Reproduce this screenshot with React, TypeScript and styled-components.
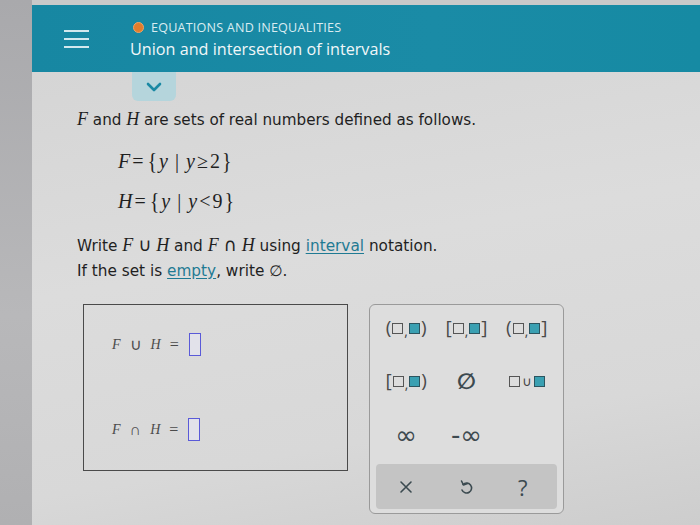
import React from "react";
import styled, { createGlobalStyle } from "styled-components";

const GlobalStyle = createGlobalStyle`
  html, body {
    margin: 0;
    padding: 0;
    width: 700px;
    height: 525px;
    overflow: hidden;
    background: #b4b4b6;
  }
  * { box-sizing: border-box; }
`;

const Screen = styled.div`
  display: flex;
  width: 700px;
  height: 525px;
`;

const Bezel = styled.div`
  width: 32px;
  flex-shrink: 0;
  background: linear-gradient(180deg, #a9a9ac 0%, #b8b8ba 60%, #b0b0b2 100%);
`;

const Main = styled.div`
  flex: 1;
  display: flex;
  flex-direction: column;
  padding-top: 5px;
  background: #c9c9c9;
`;

const Header = styled.header`
  height: 67px;
  background: linear-gradient(90deg, #1787a2 0%, #1a8ba6 60%, #168aa3 100%);
  display: flex;
  align-items: center;
  color: #e8f3f6;
  font-family: "Open Sans", "Liberation Sans", sans-serif;
`;

const Burger = styled.div`
  width: 25px;
  margin-left: 32px;
  display: flex;
  flex-direction: column;
  gap: 6px;
  span {
    display: block;
    height: 2px;
    background: #d2e8ee;
  }
`;

const Titles = styled.div`
  margin-left: 41px;
  display: flex;
  flex-direction: column;
  gap: 2px;
  margin-top: 1px;
`;

const Topic = styled.div`
  display: flex;
  align-items: center;
  font-size: 12.6px;
  letter-spacing: 0.2px;
  color: #d9ecf1;
`;

const Dot = styled.span`
  width: 11px;
  height: 11px;
  border-radius: 50%;
  background: #e27d2c;
  border: 1px solid #f1a567;
  margin-left: 3px;
  margin-right: 7px;
`;

const Title = styled.div`
  font-size: 16.2px;
  color: #f1f7f9;
`;

const Body = styled.div`
  flex: 1;
  position: relative;
  background: linear-gradient(170deg, #d5d5d5 0%, #dcdcdc 40%, #d8d8d8 75%, #cdcdcd 100%);
  padding-left: 45px;
  font-family: "DejaVu Sans", Verdana, sans-serif;
  color: #1f1f1f;
`;

const Tab = styled.div`
  width: 44px;
  height: 29px;
  margin-left: 55px;
  background: #b5d5dc;
  border-radius: 0 0 6px 6px;
  display: flex;
  align-items: center;
  justify-content: center;
`;

const Intro = styled.p`
  margin: 8px 0 0;
  font-size: 15.2px;
  line-height: 20px;
`;

const MathVar = styled.span`
  font-family: "Liberation Serif", "Times New Roman", serif;
  font-style: italic;
  font-size: 18px;
`;

const Defs = styled.div`
  margin: 20px 0 0 41px;
  display: flex;
  flex-direction: column;
  gap: 18px;
  font-family: "Liberation Serif", "Times New Roman", serif;
  font-size: 20px;
  line-height: 22px;
`;

const Def = styled.div`
  i { font-style: italic; }
  .eq { margin: 0 2px; }
  .brace { display: inline-block; transform: scaleY(1.15); margin: 0 2px; }
  .bar { margin: 0 7px; }
  .rel { margin: 0 2px; }
`;

const Instr = styled.div`
  margin-top: 20px;
  font-size: 15.3px;
  line-height: 25px;
  a {
    color: #1f7a93;
    text-decoration: underline;
    text-underline-offset: 2px;
  }
  .op { font-size: 18px; }
`;

const Workspace = styled.div`
  display: flex;
  gap: 21px;
  margin-top: 20px;
  margin-left: 6px;
`;

const AnswerBox = styled.div`
  width: 265px;
  height: 167px;
  border: 1.5px solid #4a4a4a;
  padding: 28px 0 0 28px;
  display: flex;
  flex-direction: column;
  gap: 62px;
`;

const Eq = styled.div`
  display: flex;
  align-items: center;
  font-family: "Liberation Serif", "Times New Roman", serif;
  font-size: 14px;
  color: #4b4b4b;
  i { font-style: italic; margin: 0 5px; }
  i:first-child { margin-left: 0; }
  .op { margin: 0 4px; font-size: 16px; }
`;

const Slot = styled.span`
  display: inline-block;
  width: 12px;
  height: 23px;
  border: 1.5px solid #5a5ad8;
  margin-left: 6px;
  background: #e2e2ea;
`;

const Keypad = styled.div`
  width: 195px;
  height: 210px;
  border: 1.5px solid #9a9a9a;
  border-radius: 6px;
  background: #dddddd;
  padding: 0 6px 4px;
  display: flex;
  flex-direction: column;
`;

const KeyGrid = styled.div`
  display: grid;
  grid-template-columns: repeat(3, 1fr);
  grid-auto-rows: 47px;
  row-gap: 6px;
`;

const Key = styled.div<{ $big?: boolean }>`
  display: flex;
  align-items: center;
  justify-content: center;
  font-family: "DejaVu Sans", sans-serif;
  font-size: ${(p) => (p.$big ? "26px" : "17px")};
  color: #3d4a50;
`;

const Sq = styled.span<{ $filled?: boolean }>`
  display: inline-block;
  width: 11px;
  height: 11px;
  border: 1.5px solid ${(p) => (p.$filled ? "#2c5560" : "#555")};
  background: ${(p) => (p.$filled ? "#3aa0b2" : "transparent")};
  margin: 0 1px;
`;

const Brk = styled.span`
  font-family: "Open Sans", sans-serif;
  font-size: 19px;
  color: #4a4a4a;
  line-height: 1;
  margin-top: -2px;
`;

const Comma = styled.span`
  font-family: "Open Sans", sans-serif;
  font-size: 14px;
  color: #444;
  margin: 0 0 -4px;
`;

const Cup = styled.span`
  font-size: 13px;
  color: #444;
  margin: 0 1px;
`;

const Empty = styled.span`
  font-size: 22px;
  font-weight: 600;
`;

const ActionBar = styled.div`
  margin-top: auto;
  height: 45px;
  background: #c4c4c4;
  border-radius: 4px;
  display: grid;
  grid-template-columns: repeat(3, 1fr);
  align-items: center;
  justify-items: center;
  font-family: "Open Sans", sans-serif;
  color: #3b4a50;
`;

const Help = styled.span`
  font-size: 22px;
  margin-right: 8px;
`;

const Interval = ({ l, r }: { l: string; r: string }) => (
  <Key>
    <Brk>{l}</Brk>
    <Sq />
    <Comma>,</Comma>
    <Sq $filled />
    <Brk>{r}</Brk>
  </Key>
);

export default function App() {
  return (
    <>
      <GlobalStyle />
      <Screen>
        <Bezel />
        <Main>
          <Header>
            <Burger>
              <span />
              <span />
              <span />
            </Burger>
            <Titles>
              <Topic>
                <Dot />
                EQUATIONS AND INEQUALITIES
              </Topic>
              <Title>Union and intersection of intervals</Title>
            </Titles>
          </Header>
          <Body>
            <Tab>
              <svg width="16" height="10" viewBox="0 0 16 10">
                <path d="M2 2 L8 8 L14 2" fill="none" stroke="#1a89a4" strokeWidth="2.6" strokeLinecap="round" strokeLinejoin="round" />
              </svg>
            </Tab>
            <Intro>
              <MathVar>F</MathVar> and <MathVar>H</MathVar> are sets of real numbers defined as follows.
            </Intro>
            <Defs>
              <Def>
                <i>F</i>
                <span className="eq">=</span>
                <span className="brace">{"{"}</span>
                <i>y</i>
                <span className="bar">|</span>
                <i>y</i>
                <span className="rel">≥</span>2
                <span className="brace">{"}"}</span>
              </Def>
              <Def>
                <i>H</i>
                <span className="eq">=</span>
                <span className="brace">{"{"}</span>
                <i>y</i>
                <span className="bar">|</span>
                <i>y</i>
                <span className="rel">&lt;</span>9
                <span className="brace">{"}"}</span>
              </Def>
            </Defs>
            <Instr>
              <div>
                Write <MathVar>F</MathVar> <span className="op">∪</span> <MathVar>H</MathVar> and <MathVar>F</MathVar>{" "}
                <span className="op">∩</span> <MathVar>H</MathVar> using <a>interval</a> notation.
              </div>
              <div>
                If the set is <a>empty</a>, write ∅.
              </div>
            </Instr>
            <Workspace>
              <AnswerBox>
                <Eq>
                  <i>F</i>
                  <span className="op">∪</span>
                  <i>H</i>
                  <span className="op">=</span>
                  <Slot />
                </Eq>
                <Eq>
                  <i>F</i>
                  <span className="op">∩</span>
                  <i>H</i>
                  <span className="op">=</span>
                  <Slot />
                </Eq>
              </AnswerBox>
              <Keypad>
                <KeyGrid>
                  <Interval l="(" r=")" />
                  <Interval l="[" r="]" />
                  <Interval l="(" r="]" />
                  <Interval l="[" r=")" />
                  <Key>
                    <Empty>∅</Empty>
                  </Key>
                  <Key>
                    <Sq />
                    <Cup>∪</Cup>
                    <Sq $filled />
                  </Key>
                  <Key $big>∞</Key>
                  <Key $big>-∞</Key>
                  <Key />
                </KeyGrid>
                <ActionBar>
                  <svg width="14" height="14" viewBox="0 0 14 14">
                    <path d="M2 2 L12 12 M12 2 L2 12" stroke="#3b4a50" strokeWidth="1.6" strokeLinecap="round" />
                  </svg>
                  <svg width="14" height="16" viewBox="0 0 14 16">
                    <path d="M4 5.5 A5 5 0 1 1 3 11" fill="none" stroke="#3b4a50" strokeWidth="1.6" strokeLinecap="round" />
                    <path d="M2.5 2 L4.5 6 L8.5 4.5" fill="none" stroke="#3b4a50" strokeWidth="1.6" strokeLinecap="round" strokeLinejoin="round" />
                  </svg>
                  <Help>?</Help>
                </ActionBar>
              </Keypad>
            </Workspace>
          </Body>
        </Main>
      </Screen>
    </>
  );
}
